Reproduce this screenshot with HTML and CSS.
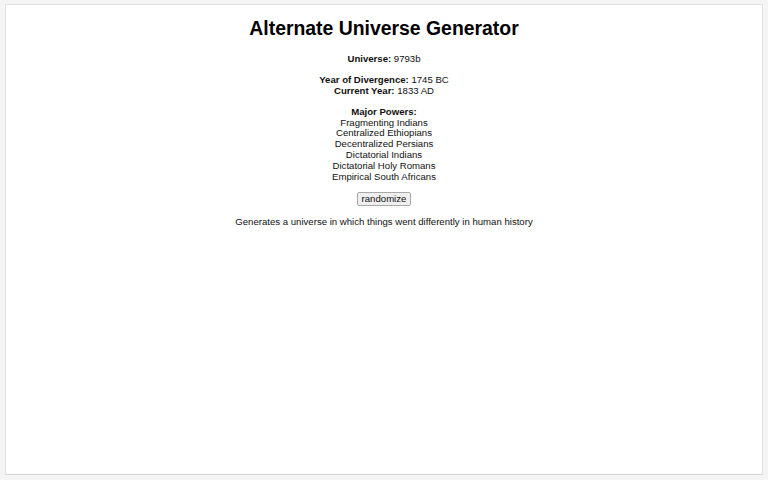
FILE: index.html
```html
<!DOCTYPE html>
<html lang="en">

<head>
    <meta charset="UTF-8">
    <meta name="viewport" content="width=device-width, initial-scale=1.0">
    <title>Alternate Universe Generator</title>
    <link rel="stylesheet" href="styles.css">
</head>

<body>
    <div class="page">
        <h1>Alternate Universe Generator</h1>
        <p><b>Universe:</b> 9793b</p>
        <p>
            <b>Year of Divergence:</b> 1745 BC<br>
            <b>Current Year:</b> 1833 AD
        </p>
        <p>
            <b>Major Powers:</b><br>
            Fragmenting Indians<br>
            Centralized Ethiopians<br>
            Decentralized Persians<br>
            Dictatorial Indians<br>
            Dictatorial Holy Romans<br>
            Empirical South Africans
        </p>
        <p class="actions"><button class="btn">randomize</button></p>
        <p>Generates a universe in which things went differently in human history</p>
    </div>
</body>

</html>
```

FILE: styles.css
```css
* {
    margin: 0;
    padding: 0;
}

html,
body {
    background-color: #f4f4f4;
}

body {
    padding: 4px 5px 5px 5px;
    font-family: "Liberation Sans", Arial, sans-serif;
    font-size: 9.6px;
    line-height: 10.8px;
    color: #111;
}

.page {
    height: 469px;
    background-color: #fff;
    border: 1px solid #e2e2e2;
    border-bottom-color: #d4d4d4;
    text-align: center;
}

h1 {
    font-size: 19.4px;
    line-height: 22px;
    font-weight: bold;
    color: #000;
    margin: 12px 0 15px;
}

p {
    margin-bottom: 10.2px;
}

.actions {
    margin-top: -1px;
    margin-bottom: 11px;
}

.btn {
    height: 14px;
    font-family: "Liberation Sans", Arial, sans-serif;
    font-size: 9.6px;
    line-height: 12px;
    color: #111;
    padding: 0 4px;
    background-color: #efefef;
    border: 1px solid #a8a8a8;
    border-radius: 2px;
}
```
